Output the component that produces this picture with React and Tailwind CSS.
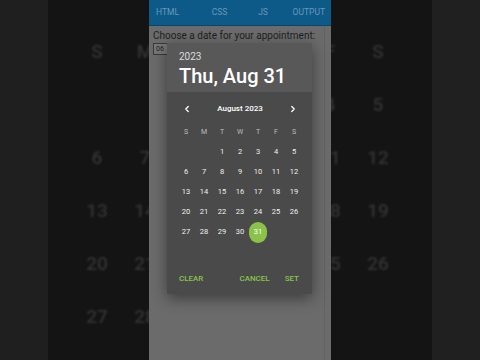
import { ChevronLeft, ChevronRight } from "lucide-react";

const weekdays = ["S", "M", "T", "W", "T", "F", "S"];

// August 2023 starts on a Tuesday
const days = [null, null, ...Array.from({ length: 31 }, (_, i) => i + 1)];

const BigCell = ({ children }) => (
    <div className="flex h-[53px] w-[48px] items-center justify-center text-[19px] font-medium text-[#343434]">
        {children}
    </div>
);

const SidePanel = ({ cols, offset }) => (
    <div className="h-full w-[101px] shrink-0 overflow-hidden bg-[#141414]">
        <div className={`grid grid-cols-[48px_48px] pt-[26px] blur-[0.8px] ${offset}`}>
            {cols.map((row, i) => row.map((c, j) => <BigCell key={`${i}-${j}`}>{c}</BigCell>))}
        </div>
    </div>
);

const DatePicker = () => (
    <div className="absolute left-[18px] top-[43px] w-[145px] shadow-[0_4px_14px_rgba(0,0,0,0.45)]">
        <div className="h-[49px] bg-[#585858] px-[12px] pt-[8px] text-white">
            <div className="text-[10px] leading-[12px] text-[#dcdcdc]">2023</div>
            <div className="mt-[1px] text-[20px] font-medium leading-[24px]">Thu, Aug 31</div>
        </div>
        <div className="h-[202px] bg-[#4a4a4a] pl-[10px] pr-[9px] pt-[10px]">
            <div className="flex h-[14px] items-center justify-between px-[5px] text-white">
                <ChevronLeft size={10} strokeWidth={3} />
                <span className="text-[8px] font-medium">August 2023</span>
                <ChevronRight size={10} strokeWidth={3} />
            </div>
            <div className="mt-[9px] grid grid-cols-7">
                {weekdays.map((d, i) => (
                    <div key={i} className="flex h-[14px] items-center justify-center text-[7px] text-[#bdbdbd]">
                        {d}
                    </div>
                ))}
            </div>
            <div className="mt-[3px] grid grid-cols-7">
                {days.map((d, i) => (
                    <div key={i} className="flex h-[20px] items-center justify-center">
                        {d === 31 ? (
                            <span className="flex h-[21px] w-[21px] items-center justify-center rounded-full bg-[#8bc34a] text-[7.5px] text-white">
                                31
                            </span>
                        ) : (
                            <span className="text-[7.5px] text-[#f0f0f0]">{d}</span>
                        )}
                    </div>
                ))}
            </div>
            <div className="mt-[31px] flex items-center text-[8px] font-medium text-[#8bc34a]">
                <span className="ml-[2px]">CLEAR</span>
                <span className="ml-auto">CANCEL</span>
                <span className="ml-[15px] mr-[4px]">SET</span>
            </div>
        </div>
    </div>
);

const App = () => {
    return (
        <div className="flex h-[360px] w-[480px] overflow-hidden bg-[#1f1f1f] font-['Roboto',sans-serif]">
            <div className="h-full w-[48px] shrink-0 bg-[#1f1f1f]" />
            <SidePanel
                offset="pl-[25px]"
                cols={[["S", "M"], ["", ""], ["6", "7"], ["13", "14"], ["20", "21"], ["27", "28"]]}
            />

            {/* phone screen */}
            <div className="relative h-full w-[182px] shrink-0 bg-[#6b6b6b]">
                <div className="flex h-[26px] items-center justify-between border-b border-[#08476d] bg-[#0d5a88] pl-[7px] pr-[6px] text-[8.5px] text-[#6a98bb]">
                    <span>HTML</span>
                    <span className="ml-[8px]">CSS</span>
                    <span className="ml-[6px]">JS</span>
                    <span>OUTPUT</span>
                </div>
                <div className="px-[4px] pt-[4px]">
                    <div className="text-[10px] leading-[12px] text-[#1e1e1e]">Choose a date for your appointment:</div>
                    <div className="mt-[1px] h-[12px] w-[150px] border border-[#3a3a3a] bg-[#777] px-[2px] text-[7px] leading-[10px] text-[#222]">
                        06
                    </div>
                </div>
                <div className="absolute right-[6px] top-[26px] h-[334px] w-px bg-[#626262]" />
                <DatePicker />
            </div>

            <SidePanel
                offset="ml-[-25px]"
                cols={[["F", "S"], ["4", "5"], ["11", "12"], ["18", "19"], ["25", "26"], ["", ""]]}
            />
            <div className="h-full w-[48px] shrink-0 bg-[#202020]" />
        </div>
    );
};

export default App;
